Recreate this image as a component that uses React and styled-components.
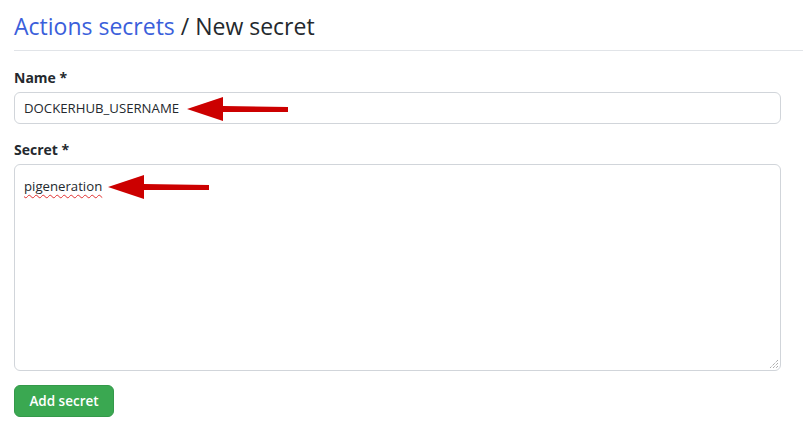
import styled, { createGlobalStyle } from "styled-components";

const GlobalStyle = createGlobalStyle`
  body {
    margin: 0;
    background: #ffffff;
    font-family: "Open Sans", "Noto Sans", sans-serif;
    color: #24292e;
  }
`;

const Page = styled.div`
  width: 803px;
  height: 427px;
  padding-left: 14px;
  box-sizing: border-box;
  overflow: hidden;
`;

const Header = styled.div`
  padding-top: 11px;
  padding-bottom: 8px;
  border-bottom: 1px solid #e1e4e8;
`;

const Title = styled.h2`
  margin: 0;
  font-size: 23px;
  font-weight: 400;
  line-height: 31px;
  color: #24292e;
`;

const Crumb = styled.a`
  color: #3b5fdb;
  text-decoration: none;
`;

const Form = styled.form`
  width: 767px;
  padding-top: 17px;
  display: flex;
  flex-direction: column;
`;

const Field = styled.div`
  display: flex;
  flex-direction: column;
  margin-bottom: ${(p) => p.$gap}px;
`;

const Label = styled.label`
  font-size: 14px;
  font-weight: 700;
  line-height: 20px;
  margin-bottom: 4px;
`;

const Control = styled.div`
  position: relative;
  height: ${(p) => p.$h}px;
  border: 1px solid #d1d5da;
  border-radius: 6px;
  box-sizing: border-box;
  padding: ${(p) => p.$pad};
  font-size: 13.2px;
  line-height: 20px;
  color: #24292e;
  background: #fff;
`;

const Misspelt = styled.span`
  text-decoration: underline wavy #e03030;
  text-decoration-thickness: 1px;
  text-underline-offset: 3px;
`;

const Grip = styled.svg`
  position: absolute;
  right: 1px;
  bottom: 1px;
`;

const Arrow = styled.svg`
  position: absolute;
  left: ${(p) => p.$x}px;
  top: ${(p) => p.$y}px;
`;

const Button = styled.button`
  align-self: flex-start;
  width: 100px;
  height: 32px;
  margin-top: -3px;
  border: 1px solid #34994a;
  border-radius: 6px;
  background: #3aa851;
  color: #fff;
  font-family: inherit;
  font-size: 13.5px;
  font-weight: 600;
`;

const RedArrow = ({ x, y }) => (
  <Arrow $x={x} $y={y} width="102" height="26" viewBox="0 0 102 26">
    <polygon points="0,12 36,0 36,9 101,10 101,15 36,15 36,24" fill="#cc0000" />
  </Arrow>
);

const App = () => {
  return (
    <Page>
      <GlobalStyle />
      <Header>
        <Title>
          <Crumb>Actions secrets</Crumb> / New secret
        </Title>
      </Header>
      <Form>
        <Field $gap={16}>
          <Label>Name *</Label>
          <Control $h={32} $pad="5px 9px">
            DOCKERHUB_USERNAME
            <RedArrow x={172} y={4} />
          </Control>
        </Field>
        <Field $gap={17}>
          <Label>Secret *</Label>
          <Control $h={207} $pad="11px 9px">
            <Misspelt>pigeneration</Misspelt>
            <RedArrow x={93} y={10} />
            <Grip width="11" height="11" viewBox="0 0 11 11">
              <path d="M10 2 L2 10 M10 5 L5 10 M10 8 L8 10" stroke="#888" strokeWidth="1" strokeDasharray="1 1" />
            </Grip>
          </Control>
        </Field>
        <Button type="button">Add secret</Button>
      </Form>
    </Page>
  );
};

export default App;
